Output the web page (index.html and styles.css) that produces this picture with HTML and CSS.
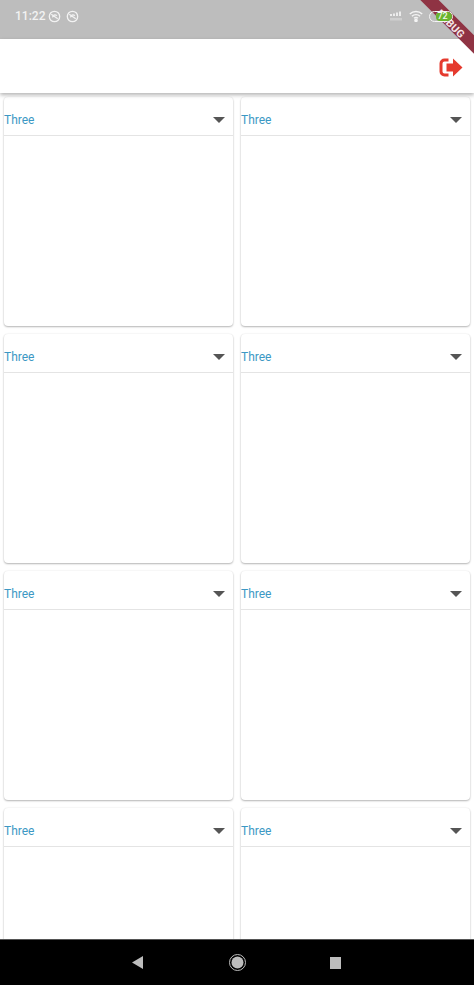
FILE: index.html
```html
<!DOCTYPE html>
<html lang="en">
<head>
  <meta charset="UTF-8">
  <meta name="viewport" content="width=device-width, initial-scale=1.0">
  <title>Three</title>
  <link rel="stylesheet" href="styles.css">
</head>
<body>

<!-- Status bar -->
<div class="status-bar">
  <div class="status-left">
    <span class="time">11:22</span>
    <svg class="status-icon" viewBox="0 0 14 14"><circle cx="7" cy="7" r="5.6"/><path d="M3.5 4.5 L10.5 9.5 M5 8 A2.4 2.4 0 0 1 9.4 6.4"/></svg>
    <svg class="status-icon icon-gap" viewBox="0 0 14 14"><circle cx="7" cy="7" r="5.6"/><path d="M3.5 4.5 L10.5 9.5 M5 8 A2.4 2.4 0 0 1 9.4 6.4"/></svg>
  </div>
  <div class="status-right">
    <svg class="signal" viewBox="0 0 12 10"><path d="M0 3h2v2H0zM3 2.500h2v2.500H3zM6 1.500h2v3.500H6zM9 0.500h2v4.500H9z"/><path class="signal-low" d="M0 7h12v2.500H0z"/></svg>
    <svg class="wifi" viewBox="0 0 14 12"><path d="M0.800 4 A9 9 0 0 1 13.200 4 M2.900 6.200 A6 6 0 0 1 11.100 6.200 M5 8.300 A3 3 0 0 1 9 8.300"/><circle cx="7" cy="10.400" r="1.100"/></svg>
    <div class="battery"><div class="battery-fill"><span class="battery-text">72</span></div></div>
  </div>
</div>

<div class="debug-banner"><span>DEBUG</span></div>

<!-- App bar -->
<header class="app-bar">
  <svg class="logout" viewBox="0 0 24 19">
    <path class="logout-door" d="M9.500 2 H5.500 A3.500 3.500 0 0 0 2 5.500 V13.500 A3.500 3.500 0 0 0 5.500 17 H9.500"/>
    <path class="logout-arrow" d="M14 0.500 L23.500 9.500 L14 18.500 V13.500 H7.500 V5.500 H14 Z"/>
  </svg>
</header>

<main class="grid">
  <section class="card"><div class="card-head"><span class="card-value">Three</span><span class="caret"></span></div></section>
  <section class="card"><div class="card-head"><span class="card-value">Three</span><span class="caret"></span></div></section>
  <section class="card"><div class="card-head"><span class="card-value">Three</span><span class="caret"></span></div></section>
  <section class="card"><div class="card-head"><span class="card-value">Three</span><span class="caret"></span></div></section>
  <section class="card"><div class="card-head"><span class="card-value">Three</span><span class="caret"></span></div></section>
  <section class="card"><div class="card-head"><span class="card-value">Three</span><span class="caret"></span></div></section>
  <section class="card"><div class="card-head"><span class="card-value">Three</span><span class="caret"></span></div></section>
  <section class="card"><div class="card-head"><span class="card-value">Three</span><span class="caret"></span></div></section>
</main>

<!-- Navigation bar -->
<nav class="nav-bar">
  <svg class="nav-back" viewBox="0 0 11 13"><path d="M11 0 V13 L0 6.500 Z"/></svg>
  <svg class="nav-home" viewBox="0 0 17 17"><circle class="home-ring" cx="8.500" cy="8.500" r="8"/><circle class="home-dot" cx="8.500" cy="8.500" r="6"/></svg>
  <div class="nav-recent"></div>
</nav>

</body>
</html>
```

FILE: styles.css
```css
* {
  margin: 0;
  padding: 0;
  box-sizing: border-box;
}

body {
  font-family: 'Roboto', sans-serif;
  background: #fff;
  height: 100vh;
  display: flex;
  flex-direction: column;
  overflow: hidden;
  position: relative;
}

.status-bar {
  height: 39px;
  flex-shrink: 0;
  background: #bdbdbd;
  display: flex;
  align-items: center;
  justify-content: space-between;
  padding: 0 21px 7px 15px;
  color: #f2f2f2;
}

.status-left,
.status-right {
  display: flex;
  align-items: center;
}

.status-right {
  position: relative;
  z-index: 11;
}

.time {
  font-size: 12px;
  font-weight: 500;
  margin-right: 3px;
}

.status-icon {
  width: 13px;
  height: 13px;
  fill: none;
  stroke: #f2f2f2;
  stroke-width: 1.4;
}

.icon-gap {
  margin-left: 5px;
}

.signal {
  width: 12px;
  height: 10px;
  fill: #ececec;
  margin-right: 7px;
}

.signal-low {
  fill: #cfcfcf;
}

.wifi {
  width: 14px;
  height: 12px;
  fill: #f5f5f5;
  stroke: #f5f5f5;
  stroke-width: 1.4;
  margin-right: 6px;
}

.wifi path {
  fill: none;
}

.battery {
  width: 24px;
  height: 11px;
  border: 1px solid #f5f5f5;
  border-radius: 6px;
  overflow: hidden;
  padding-left: 6px;
}

.battery-fill {
  height: 100%;
  background: #6ab52e;
  border-radius: 4px;
  text-align: center;
  line-height: 9px;
}

.battery-text {
  display: block;
  font-size: 9px;
  font-weight: 500;
  color: #f5f5f5;
  margin-right: 3px;
}

.debug-banner {
  position: absolute;
  top: 16px;
  right: -28px;
  width: 100px;
  height: 13px;
  background: #8f3343;
  transform: rotate(45deg);
  text-align: center;
  z-index: 10;
  line-height: 13px;
}

.debug-banner span {
  font-size: 10.500px;
  font-weight: 700;
  letter-spacing: 0.3px;
  color: #f4e6e8;
}

.app-bar {
  height: 54px;
  flex-shrink: 0;
  background: #fff;
  box-shadow: 0 2px 4px rgba(0, 0, 0, 0.3);
  display: flex;
  align-items: center;
  justify-content: flex-end;
  padding: 2px 11px 0 0;
  position: relative;
  z-index: 2;
}

.logout {
  width: 24px;
  height: 19px;
}

.logout-door {
  fill: none;
  stroke: #e53a2e;
  stroke-width: 3;
}

.logout-arrow {
  fill: #e53a2e;
}

.grid {
  flex: 1;
  min-height: 0;
  overflow: hidden;
  display: grid;
  grid-template-columns: 229px 229px;
  grid-auto-rows: 229px;
  gap: 8px;
  padding: 4px 4px 0;
}

.card {
  background: #fff;
  border-radius: 4px;
  box-shadow: 0 1px 2px rgba(0, 0, 0, 0.28), 0 0 2px rgba(0, 0, 0, 0.08);
}

.card-head {
  height: 39px;
  display: flex;
  align-items: center;
  justify-content: space-between;
  border-bottom: 1px solid #e4e4e4;
  padding: 6px 8px 0 0;
}

.card-value {
  font-size: 12px;
  margin-top: 2px;
  color: #3c98c4;
}

.caret {
  width: 0;
  height: 0;
  margin-top: 2px;
  border-left: 6px solid transparent;
  border-right: 6px solid transparent;
  border-top: 6px solid #555;
}

.nav-bar {
  height: 46px;
  flex-shrink: 0;
  background: #000;
  border-top: 1px solid #555;
  display: flex;
  align-items: center;
  justify-content: center;
  gap: 85px;
  padding-right: 2px;
  position: relative;
  z-index: 3;
}

.nav-back {
  width: 11px;
  height: 13px;
  fill: #bdbdbd;
}

.nav-home {
  width: 17px;
  height: 17px;
  margin: 0 -1px 0 1px;
}

.home-ring {
  fill: none;
  stroke: #bdbdbd;
  stroke-width: 1;
}

.home-dot {
  fill: #bdbdbd;
}

.nav-recent {
  width: 11px;
  height: 12px;
  background: #bdbdbd;
}
```
